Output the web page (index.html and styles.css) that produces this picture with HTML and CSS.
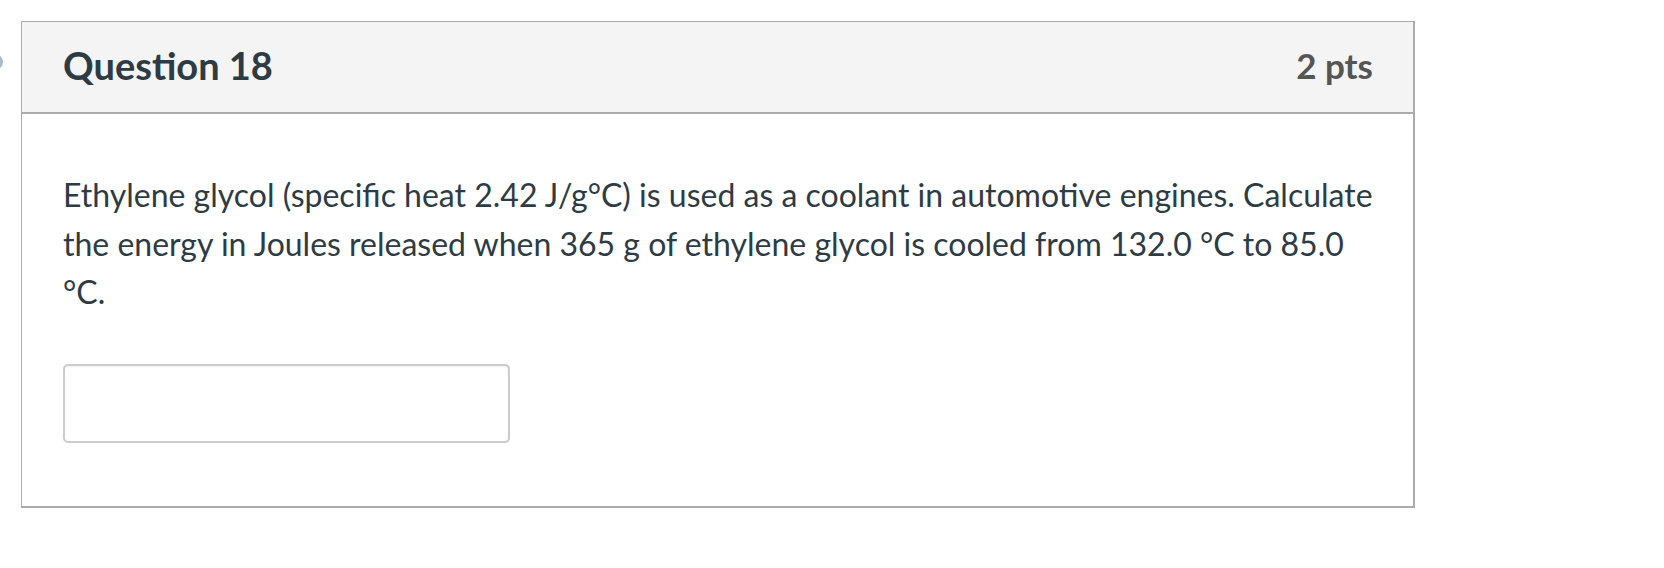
FILE: index.html
```html
<!DOCTYPE html>
<html lang="en">
<head>
<meta charset="utf-8">
<title>Question 18</title>
<link rel="stylesheet" href="styles.css">
</head>
<body>
<div class="page">
  <span class="edge-dot"></span>
  <div class="question">
    <div class="question-header">
      <h2 class="question-title">Question 18</h2>
      <span class="question-points">2 pts</span>
    </div>
    <div class="question-body">
      <p class="question-text">Ethylene glycol (specific heat 2.42 J/g°C) is used as a coolant in automotive engines. Calculate the energy in Joules released when 365 g of ethylene glycol is cooled from 132.0 °C to 85.0 °C.</p>
      <input class="answer-input" type="text" aria-label="Answer">
    </div>
  </div>
</div>
</body>
</html>
```
FILE: styles.css
```css
html, body {
  margin: 0;
  padding: 0;
  background: #ffffff;
}

body {
  font-family: Lato, "Open Sans", "Liberation Sans", sans-serif;
  color: #2d3b45;
}

.page {
  position: relative;
  padding: 21px 0 0 21px;
}

.edge-dot {
  position: absolute;
  left: -9px;
  top: 55px;
  width: 12px;
  height: 14px;
  border-radius: 50%;
  background: #a9bccd;
}

.question {
  width: 1394px;
  box-sizing: border-box;
  border-style: solid;
  border-color: #ababab;
  border-width: 1px 2px 2px 1px;
  background: #ffffff;
}

.question-header {
  display: flex;
  align-items: center;
  justify-content: space-between;
  height: 92px;
  box-sizing: border-box;
  padding: 0 40px 4px 41px;
  background: #f4f4f4;
  border-bottom: 2px solid #ababab;
}

.question-title {
  margin: 0;
  font-size: 38px;
  font-weight: 700;
  color: #2d3b45;
}

.question-points {
  font-size: 35px;
  font-weight: 700;
  color: #555555;
}

.question-body {
  padding: 57px 40px 63px 41px;
}

.question-text {
  margin: 0 0 47px;
  font-size: 32px;
  line-height: 48.5px;
  color: #2d3b45;
}

.answer-input {
  display: block;
  width: 447px;
  height: 79px;
  box-sizing: border-box;
  margin: 0;
  border: 2px solid #cccccc;
  border-radius: 5px;
  box-shadow: inset 0 1px 2px rgba(0, 0, 0, 0.06);
  background: #ffffff;
  font: inherit;
}
```
